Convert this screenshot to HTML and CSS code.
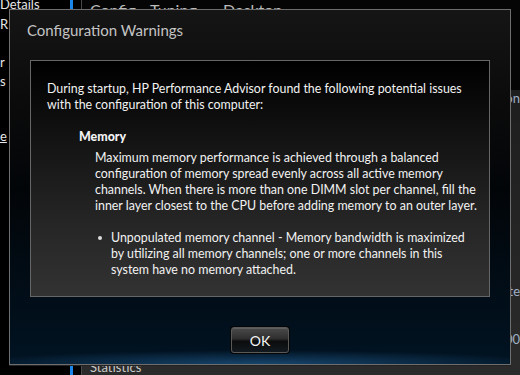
FILE: index.html
```html
<!DOCTYPE html>
<html>
<head>
<meta charset="utf-8">
<link rel="stylesheet" href="styles.css">
</head>
<body>
<div class="app">
  <div class="sidebar">
    <div class="side-item s1">Details</div>
    <div class="side-item s2">R</div>
    <div class="side-item s3">r</div>
    <div class="side-item s4">s</div>
    <div class="side-item s5 link">e</div>
  </div>
  <div class="accent"></div>
  <div class="main">
    <div class="tabs"><span class="tab t1">Config</span><span class="tab t2">Tuning</span><span class="tab">Desktop</span></div>
    <div class="panel-bg">
      <div class="row r1">Information</div>
      <div class="row r2">Update</div>
      <div class="row r3">2000</div>
      <div class="row r4">Statistics</div>
    </div>
  </div>
</div>

<div class="dialog">
  <div class="dialog-title">Configuration Warnings</div>
  <div class="content">
    <p class="intro">During startup, HP Performance Advisor found the following potential issues with the configuration of this computer:</p>
    <h3 class="heading">Memory</h3>
    <p class="desc">Maximum memory performance is achieved through a balanced configuration of memory spread evenly across all active memory channels. When there is more than one DIMM slot per channel, fill the inner layer closest to the CPU before adding memory to an outer layer.</p>
    <ul class="issues">
      <li>Unpopulated memory channel - Memory bandwidth is maximized by utilizing all memory channels; one or more channels in this system have no memory attached.</li>
    </ul>
  </div>
  <div class="footer">
    <button class="ok">OK</button>
  </div>
</div>
</body>
</html>
```

FILE: styles.css
```css
html, body {
  margin: 0;
  padding: 0;
}
body {
  width: 520px;
  height: 375px;
  overflow: hidden;
  position: relative;
  background: #000;
  font-family: "Lato", "Noto Sans", sans-serif;
  color: #f2f2f2;
}
.app {
  display: flex;
  height: 375px;
}
.sidebar {
  width: 70px;
  font-size: 13px;
  color: #e6e6e6;
}
.side-item {
  line-height: 19px;
}
.s1 { margin-top: -5px; }
.s2 { margin-top: 1px; }
.s3 { margin-top: 19px; }
.s4 { margin-top: 0; }
.s5 { margin-top: 36px; text-decoration: underline; }
.accent {
  width: 3px;
  background: #1b86ea;
}
.main {
  flex: 1;
  margin-left: 8px;
  border-left: 1px solid #4a4a4a;
  display: flex;
  flex-direction: column;
}
.tabs {
  height: 96px;
  background: #050505;
  font-size: 16px;
  color: #bbb;
  display: flex;
  padding-left: 8px;
  line-height: 16px;
  margin-top: 0;
  padding-top: 2px;
  margin-bottom: -3px;
}
.tab { white-space: nowrap; }
.t1 { width: 60px; }
.t2 { width: 73px; }
.panel-bg {
  flex: 1;
  background: linear-gradient(#1e1e1e, #2b2b2b);
  display: flex;
  flex-direction: column;
  align-items: flex-end;
  font-size: 13px;
  color: #9fb0c8;
}
.row { width: 10px; overflow: hidden; white-space: nowrap; direction: rtl; }
.r1 { margin-top: 0; }
.r2 { margin-top: 177px; }
.r3 { margin-top: 32px; }
.r4 { margin-top: 12px; color: #ccc; align-self: flex-start; width: 80px; direction: ltr; padding-left: 8px; }

.dialog {
  position: absolute;
  left: 9px;
  top: 9px;
  width: 500px;
  height: 354px;
  border: 1px solid #6e6e6e;
  background:
    radial-gradient(ellipse 300px 14px at 50% 100%, rgba(40,110,170,0.55), rgba(0,0,0,0) 100%),
    linear-gradient(to bottom, #151515 0px, #0b0b0b 90px, #020508 180px, #011322 100%);
  display: flex;
  flex-direction: column;
  box-shadow: 0 1px 0 #222;
}
.dialog-title {
  padding: 9px 0 19px 17px;
  line-height: 22px;
  font-size: 15px;
  color: #c4c4c4;
}
.content {
  margin-left: 20px;
  width: 430px;
  height: 195px;
  border: 1px solid #666;
  background: linear-gradient(to bottom, #000 0%, #141414 35%, #262626 70%, #323232 100%);
  padding: 20px 12px 20px 16px;
  font-size: 12.4px;
  line-height: 16px;
}
.intro { margin: 0; }
.heading {
  margin: 16px 0 0 32px;
  font-size: 12.4px;
  line-height: 16px;
  font-weight: 900;
}
.desc {
  margin: 5px 0 0 48px;
}
.issues {
  margin: 16px 0 0 48px;
  padding-left: 16px;
  list-style: none;
}
.issues li { position: relative; }
.issues li::before {
  content: "";
  position: absolute;
  left: -13px;
  top: 6px;
  width: 4px;
  height: 4px;
  border-radius: 50%;
  background: #ddd;
}
.footer {
  display: flex;
  justify-content: center;
  padding-top: 30px;
}
.ok {
  width: 58px;
  height: 26px;
  border: 1px solid #5a5a5a;
  border-radius: 3px;
  background: linear-gradient(to bottom, #4a4a4a 0%, #2e2e2e 45%, #0c0c0c 55%, #121a20 100%);
  box-shadow: inset 0 1px 0 rgba(255,255,255,0.12), 0 0 0 1px #050505;
  color: #f5f5f5;
  font-family: "Lato", "Noto Sans", sans-serif;
  font-size: 14px;
  padding: 0;
}
```
